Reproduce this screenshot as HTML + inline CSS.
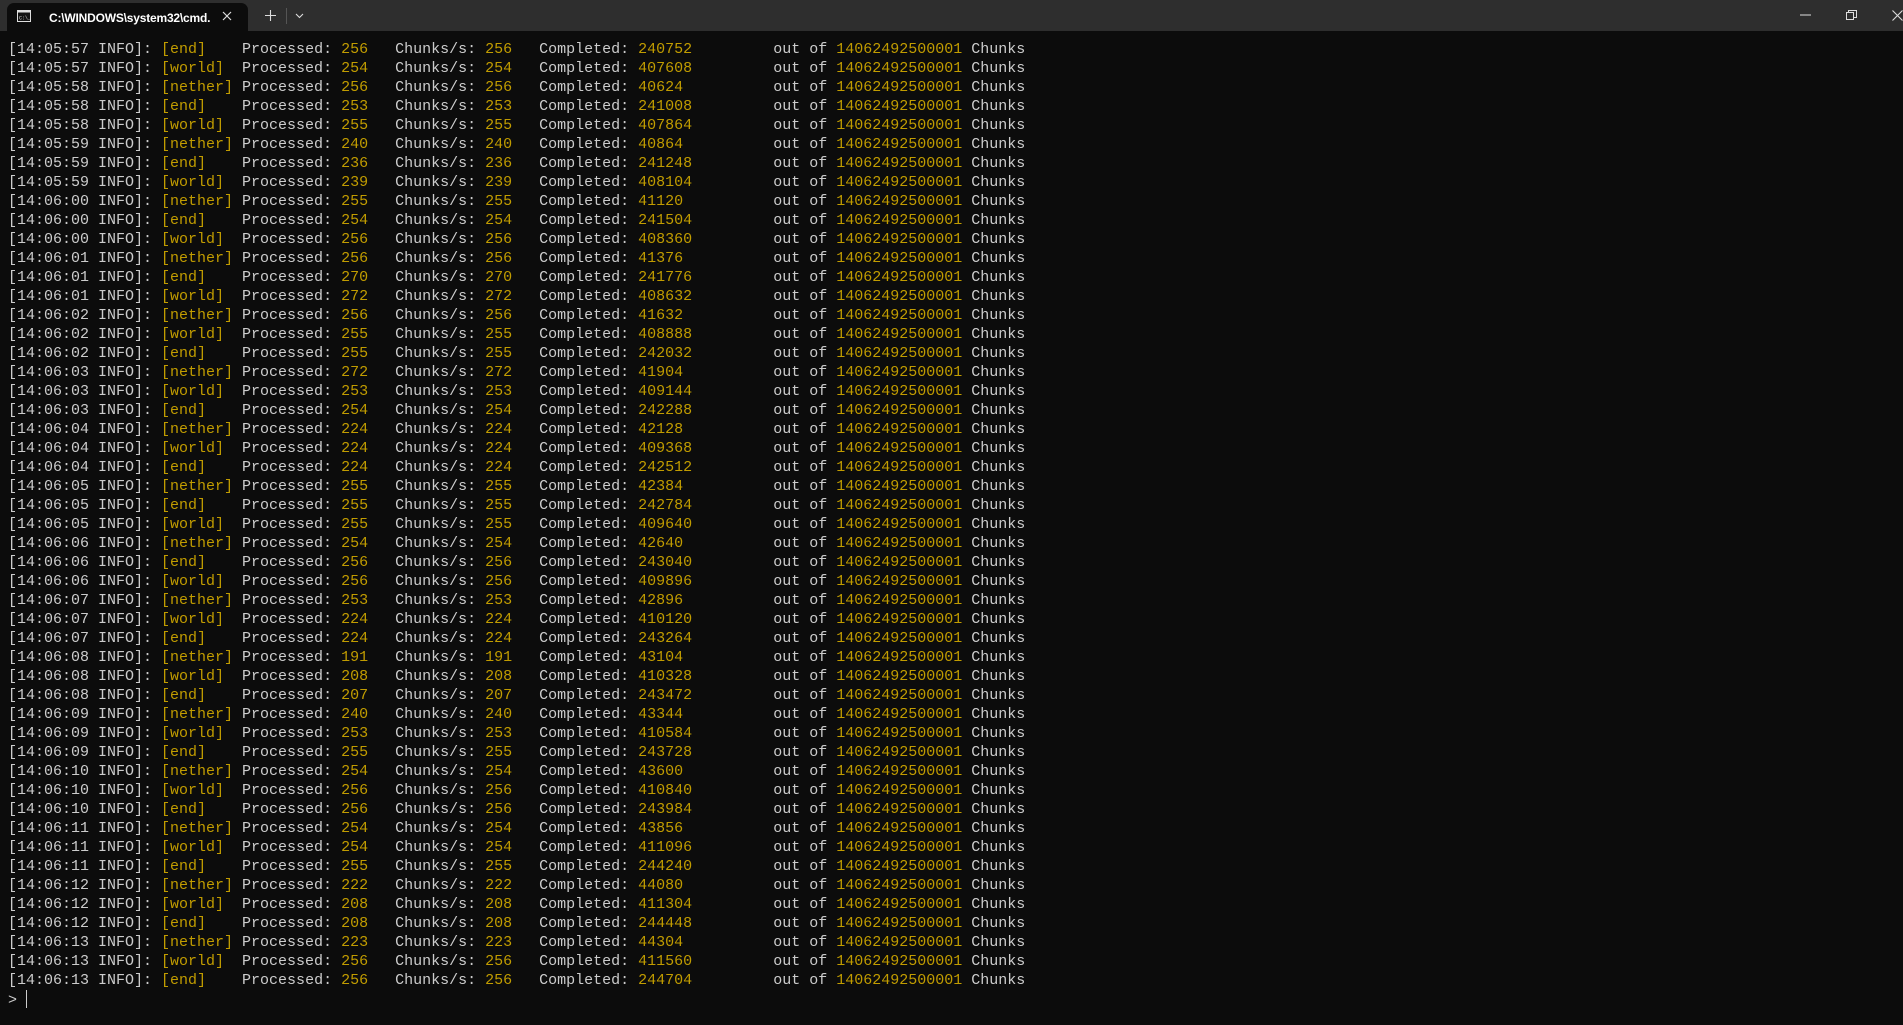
<!DOCTYPE html>
<html><head><meta charset="utf-8"><style>
html,body{margin:0;padding:0;background:#0c0c0c;width:1903px;height:1025px;overflow:hidden}
.bar{position:absolute;left:0;top:0;width:1903px;height:31px;background:#2e2e2e}
.tab{position:absolute;left:7px;top:3px;width:241px;height:28px;background:#0c0c0c;border-radius:7px 7px 0 0}
.title{position:absolute;left:42px;top:8px;color:#fff;font:bold 12px "Liberation Sans",sans-serif;letter-spacing:-0.2px}
pre{position:absolute;left:8px;top:40px;margin:0;font:15px/19px "Liberation Mono",monospace;color:#cccccc}
i{font-style:normal;color:#c19c00}
.cur{display:inline-block;width:1px;height:18px;background:#ccc;vertical-align:-4px}
</style></head><body>
<div class="bar">
<div class="tab">
<svg style="position:absolute;left:10px;top:7px" width="14" height="12" viewBox="0 0 14 12"><rect x="0.5" y="0.5" width="13" height="11" fill="#111" stroke="#ddd"/><rect x="0.5" y="0.5" width="13" height="2" fill="#ddd"/><text x="2" y="9.5" font-size="5" fill="#ddd" font-family="Liberation Mono">C:\_</text></svg>
<div class="title">C:\WINDOWS\system32\cmd.</div>
<svg style="position:absolute;left:215px;top:8px" width="10" height="10" viewBox="0 0 10 10"><path d="M1 1L9 9M9 1L1 9" stroke="#ddd" stroke-width="1.2"/></svg>
</div>
<svg style="position:absolute;left:265px;top:10px" width="11" height="11" viewBox="0 0 11 11"><path d="M5.5 0V11M0 5.5H11" stroke="#ddd" stroke-width="1.1"/></svg>
<div style="position:absolute;left:286px;top:8px;width:1px;height:16px;background:#555"></div>
<svg style="position:absolute;left:295px;top:13px" width="9" height="6" viewBox="0 0 9 6"><path d="M1 1L4.5 4.5L8 1" stroke="#ddd" fill="none" stroke-width="1.1"/></svg>
<svg style="position:absolute;left:1800px;top:14px" width="11" height="2"><path d="M0 1H11" stroke="#ddd"/></svg>
<svg style="position:absolute;left:1846px;top:10px" width="11" height="10" viewBox="0 0 11 10"><rect x="0.5" y="2.5" width="7" height="7" fill="none" stroke="#ddd"/><path d="M2.5 2.5V0.5H10.5V7.5H7.5" fill="none" stroke="#ddd"/></svg>
<svg style="position:absolute;left:1892px;top:10px" width="11" height="11" viewBox="0 0 11 11"><path d="M0.5 0.5L10.5 10.5M10.5 0.5L0.5 10.5" stroke="#ddd" stroke-width="1.1"/></svg>
</div>
<pre>[14:05:57 INFO]: <i>[end]</i>    Processed: <i>256</i>   Chunks/s: <i>256</i>   Completed: <i>240752</i>         out of <i>14062492500001</i> Chunks
[14:05:57 INFO]: <i>[world]</i>  Processed: <i>254</i>   Chunks/s: <i>254</i>   Completed: <i>407608</i>         out of <i>14062492500001</i> Chunks
[14:05:58 INFO]: <i>[nether]</i> Processed: <i>256</i>   Chunks/s: <i>256</i>   Completed: <i>40624</i>          out of <i>14062492500001</i> Chunks
[14:05:58 INFO]: <i>[end]</i>    Processed: <i>253</i>   Chunks/s: <i>253</i>   Completed: <i>241008</i>         out of <i>14062492500001</i> Chunks
[14:05:58 INFO]: <i>[world]</i>  Processed: <i>255</i>   Chunks/s: <i>255</i>   Completed: <i>407864</i>         out of <i>14062492500001</i> Chunks
[14:05:59 INFO]: <i>[nether]</i> Processed: <i>240</i>   Chunks/s: <i>240</i>   Completed: <i>40864</i>          out of <i>14062492500001</i> Chunks
[14:05:59 INFO]: <i>[end]</i>    Processed: <i>236</i>   Chunks/s: <i>236</i>   Completed: <i>241248</i>         out of <i>14062492500001</i> Chunks
[14:05:59 INFO]: <i>[world]</i>  Processed: <i>239</i>   Chunks/s: <i>239</i>   Completed: <i>408104</i>         out of <i>14062492500001</i> Chunks
[14:06:00 INFO]: <i>[nether]</i> Processed: <i>255</i>   Chunks/s: <i>255</i>   Completed: <i>41120</i>          out of <i>14062492500001</i> Chunks
[14:06:00 INFO]: <i>[end]</i>    Processed: <i>254</i>   Chunks/s: <i>254</i>   Completed: <i>241504</i>         out of <i>14062492500001</i> Chunks
[14:06:00 INFO]: <i>[world]</i>  Processed: <i>256</i>   Chunks/s: <i>256</i>   Completed: <i>408360</i>         out of <i>14062492500001</i> Chunks
[14:06:01 INFO]: <i>[nether]</i> Processed: <i>256</i>   Chunks/s: <i>256</i>   Completed: <i>41376</i>          out of <i>14062492500001</i> Chunks
[14:06:01 INFO]: <i>[end]</i>    Processed: <i>270</i>   Chunks/s: <i>270</i>   Completed: <i>241776</i>         out of <i>14062492500001</i> Chunks
[14:06:01 INFO]: <i>[world]</i>  Processed: <i>272</i>   Chunks/s: <i>272</i>   Completed: <i>408632</i>         out of <i>14062492500001</i> Chunks
[14:06:02 INFO]: <i>[nether]</i> Processed: <i>256</i>   Chunks/s: <i>256</i>   Completed: <i>41632</i>          out of <i>14062492500001</i> Chunks
[14:06:02 INFO]: <i>[world]</i>  Processed: <i>255</i>   Chunks/s: <i>255</i>   Completed: <i>408888</i>         out of <i>14062492500001</i> Chunks
[14:06:02 INFO]: <i>[end]</i>    Processed: <i>255</i>   Chunks/s: <i>255</i>   Completed: <i>242032</i>         out of <i>14062492500001</i> Chunks
[14:06:03 INFO]: <i>[nether]</i> Processed: <i>272</i>   Chunks/s: <i>272</i>   Completed: <i>41904</i>          out of <i>14062492500001</i> Chunks
[14:06:03 INFO]: <i>[world]</i>  Processed: <i>253</i>   Chunks/s: <i>253</i>   Completed: <i>409144</i>         out of <i>14062492500001</i> Chunks
[14:06:03 INFO]: <i>[end]</i>    Processed: <i>254</i>   Chunks/s: <i>254</i>   Completed: <i>242288</i>         out of <i>14062492500001</i> Chunks
[14:06:04 INFO]: <i>[nether]</i> Processed: <i>224</i>   Chunks/s: <i>224</i>   Completed: <i>42128</i>          out of <i>14062492500001</i> Chunks
[14:06:04 INFO]: <i>[world]</i>  Processed: <i>224</i>   Chunks/s: <i>224</i>   Completed: <i>409368</i>         out of <i>14062492500001</i> Chunks
[14:06:04 INFO]: <i>[end]</i>    Processed: <i>224</i>   Chunks/s: <i>224</i>   Completed: <i>242512</i>         out of <i>14062492500001</i> Chunks
[14:06:05 INFO]: <i>[nether]</i> Processed: <i>255</i>   Chunks/s: <i>255</i>   Completed: <i>42384</i>          out of <i>14062492500001</i> Chunks
[14:06:05 INFO]: <i>[end]</i>    Processed: <i>255</i>   Chunks/s: <i>255</i>   Completed: <i>242784</i>         out of <i>14062492500001</i> Chunks
[14:06:05 INFO]: <i>[world]</i>  Processed: <i>255</i>   Chunks/s: <i>255</i>   Completed: <i>409640</i>         out of <i>14062492500001</i> Chunks
[14:06:06 INFO]: <i>[nether]</i> Processed: <i>254</i>   Chunks/s: <i>254</i>   Completed: <i>42640</i>          out of <i>14062492500001</i> Chunks
[14:06:06 INFO]: <i>[end]</i>    Processed: <i>256</i>   Chunks/s: <i>256</i>   Completed: <i>243040</i>         out of <i>14062492500001</i> Chunks
[14:06:06 INFO]: <i>[world]</i>  Processed: <i>256</i>   Chunks/s: <i>256</i>   Completed: <i>409896</i>         out of <i>14062492500001</i> Chunks
[14:06:07 INFO]: <i>[nether]</i> Processed: <i>253</i>   Chunks/s: <i>253</i>   Completed: <i>42896</i>          out of <i>14062492500001</i> Chunks
[14:06:07 INFO]: <i>[world]</i>  Processed: <i>224</i>   Chunks/s: <i>224</i>   Completed: <i>410120</i>         out of <i>14062492500001</i> Chunks
[14:06:07 INFO]: <i>[end]</i>    Processed: <i>224</i>   Chunks/s: <i>224</i>   Completed: <i>243264</i>         out of <i>14062492500001</i> Chunks
[14:06:08 INFO]: <i>[nether]</i> Processed: <i>191</i>   Chunks/s: <i>191</i>   Completed: <i>43104</i>          out of <i>14062492500001</i> Chunks
[14:06:08 INFO]: <i>[world]</i>  Processed: <i>208</i>   Chunks/s: <i>208</i>   Completed: <i>410328</i>         out of <i>14062492500001</i> Chunks
[14:06:08 INFO]: <i>[end]</i>    Processed: <i>207</i>   Chunks/s: <i>207</i>   Completed: <i>243472</i>         out of <i>14062492500001</i> Chunks
[14:06:09 INFO]: <i>[nether]</i> Processed: <i>240</i>   Chunks/s: <i>240</i>   Completed: <i>43344</i>          out of <i>14062492500001</i> Chunks
[14:06:09 INFO]: <i>[world]</i>  Processed: <i>253</i>   Chunks/s: <i>253</i>   Completed: <i>410584</i>         out of <i>14062492500001</i> Chunks
[14:06:09 INFO]: <i>[end]</i>    Processed: <i>255</i>   Chunks/s: <i>255</i>   Completed: <i>243728</i>         out of <i>14062492500001</i> Chunks
[14:06:10 INFO]: <i>[nether]</i> Processed: <i>254</i>   Chunks/s: <i>254</i>   Completed: <i>43600</i>          out of <i>14062492500001</i> Chunks
[14:06:10 INFO]: <i>[world]</i>  Processed: <i>256</i>   Chunks/s: <i>256</i>   Completed: <i>410840</i>         out of <i>14062492500001</i> Chunks
[14:06:10 INFO]: <i>[end]</i>    Processed: <i>256</i>   Chunks/s: <i>256</i>   Completed: <i>243984</i>         out of <i>14062492500001</i> Chunks
[14:06:11 INFO]: <i>[nether]</i> Processed: <i>254</i>   Chunks/s: <i>254</i>   Completed: <i>43856</i>          out of <i>14062492500001</i> Chunks
[14:06:11 INFO]: <i>[world]</i>  Processed: <i>254</i>   Chunks/s: <i>254</i>   Completed: <i>411096</i>         out of <i>14062492500001</i> Chunks
[14:06:11 INFO]: <i>[end]</i>    Processed: <i>255</i>   Chunks/s: <i>255</i>   Completed: <i>244240</i>         out of <i>14062492500001</i> Chunks
[14:06:12 INFO]: <i>[nether]</i> Processed: <i>222</i>   Chunks/s: <i>222</i>   Completed: <i>44080</i>          out of <i>14062492500001</i> Chunks
[14:06:12 INFO]: <i>[world]</i>  Processed: <i>208</i>   Chunks/s: <i>208</i>   Completed: <i>411304</i>         out of <i>14062492500001</i> Chunks
[14:06:12 INFO]: <i>[end]</i>    Processed: <i>208</i>   Chunks/s: <i>208</i>   Completed: <i>244448</i>         out of <i>14062492500001</i> Chunks
[14:06:13 INFO]: <i>[nether]</i> Processed: <i>223</i>   Chunks/s: <i>223</i>   Completed: <i>44304</i>          out of <i>14062492500001</i> Chunks
[14:06:13 INFO]: <i>[world]</i>  Processed: <i>256</i>   Chunks/s: <i>256</i>   Completed: <i>411560</i>         out of <i>14062492500001</i> Chunks
[14:06:13 INFO]: <i>[end]</i>    Processed: <i>256</i>   Chunks/s: <i>256</i>   Completed: <i>244704</i>         out of <i>14062492500001</i> Chunks
&gt; <span class="cur"></span></pre>
</body></html>
